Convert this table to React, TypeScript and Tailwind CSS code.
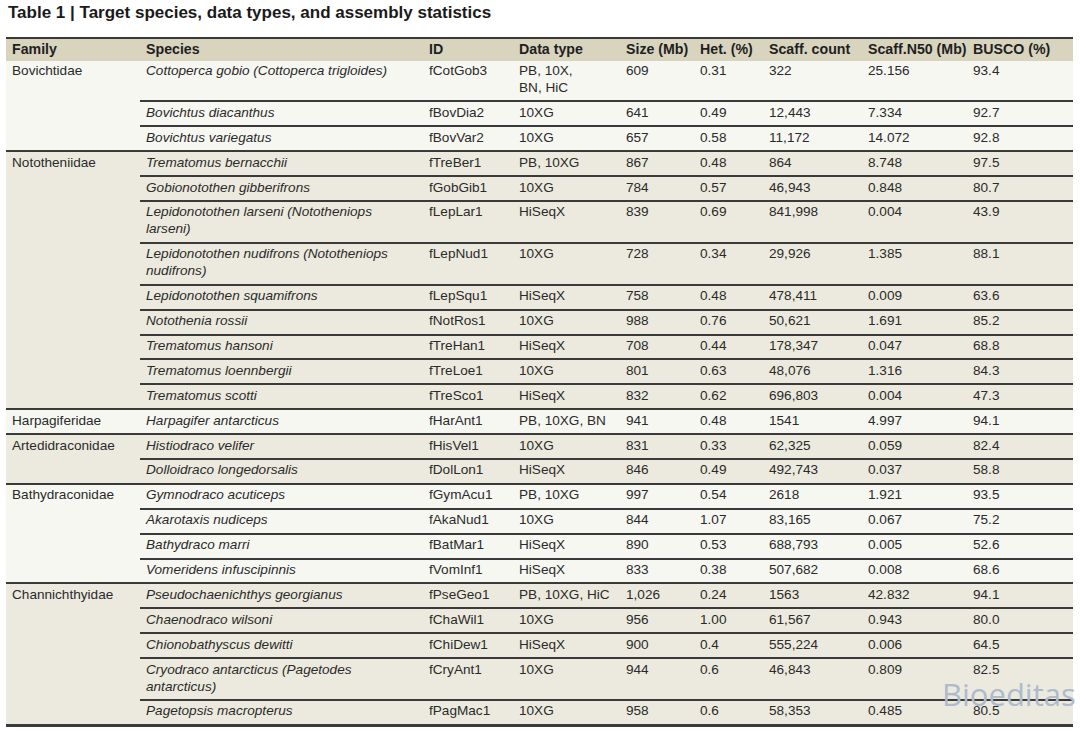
type Row = string[];

interface Group {
  family: string;
  tone: "light" | "dark";
  rows: Row[];
}

const groups: Group[] = [
  {
    family: "Bovichtidae",
    tone: "light",
    rows: [
      ["Cottoperca gobio (Cottoperca trigloides)", "fCotGob3", "PB, 10X,\nBN, HiC", "609", "0.31", "322", "25.156", "93.4"],
      ["Bovichtus diacanthus", "fBovDia2", "10XG", "641", "0.49", "12,443", "7.334", "92.7"],
      ["Bovichtus variegatus", "fBovVar2", "10XG", "657", "0.58", "11,172", "14.072", "92.8"],
    ],
  },
  {
    family: "Nototheniidae",
    tone: "dark",
    rows: [
      ["Trematomus bernacchii", "fTreBer1", "PB, 10XG", "867", "0.48", "864", "8.748", "97.5"],
      ["Gobionotothen gibberifrons", "fGobGib1", "10XG", "784", "0.57", "46,943", "0.848", "80.7"],
      ["Lepidonotothen larseni (Nototheniops\nlarseni)", "fLepLar1", "HiSeqX", "839", "0.69", "841,998", "0.004", "43.9"],
      ["Lepidonotothen nudifrons (Nototheniops\nnudifrons)", "fLepNud1", "10XG", "728", "0.34", "29,926", "1.385", "88.1"],
      ["Lepidonotothen squamifrons", "fLepSqu1", "HiSeqX", "758", "0.48", "478,411", "0.009", "63.6"],
      ["Notothenia rossii", "fNotRos1", "10XG", "988", "0.76", "50,621", "1.691", "85.2"],
      ["Trematomus hansoni", "fTreHan1", "HiSeqX", "708", "0.44", "178,347", "0.047", "68.8"],
      ["Trematomus loennbergii", "fTreLoe1", "10XG", "801", "0.63", "48,076", "1.316", "84.3"],
      ["Trematomus scotti", "fTreSco1", "HiSeqX", "832", "0.62", "696,803", "0.004", "47.3"],
    ],
  },
  {
    family: "Harpagiferidae",
    tone: "light",
    rows: [["Harpagifer antarcticus", "fHarAnt1", "PB, 10XG, BN", "941", "0.48", "1541", "4.997", "94.1"]],
  },
  {
    family: "Artedidraconidae",
    tone: "dark",
    rows: [
      ["Histiodraco velifer", "fHisVel1", "10XG", "831", "0.33", "62,325", "0.059", "82.4"],
      ["Dolloidraco longedorsalis", "fDolLon1", "HiSeqX", "846", "0.49", "492,743", "0.037", "58.8"],
    ],
  },
  {
    family: "Bathydraconidae",
    tone: "light",
    rows: [
      ["Gymnodraco acuticeps", "fGymAcu1", "PB, 10XG", "997", "0.54", "2618", "1.921", "93.5"],
      ["Akarotaxis nudiceps", "fAkaNud1", "10XG", "844", "1.07", "83,165", "0.067", "75.2"],
      ["Bathydraco marri", "fBatMar1", "HiSeqX", "890", "0.53", "688,793", "0.005", "52.6"],
      ["Vomeridens infuscipinnis", "fVomInf1", "HiSeqX", "833", "0.38", "507,682", "0.008", "68.6"],
    ],
  },
  {
    family: "Channichthyidae",
    tone: "dark",
    rows: [
      ["Pseudochaenichthys georgianus", "fPseGeo1", "PB, 10XG, HiC", "1,026", "0.24", "1563", "42.832", "94.1"],
      ["Chaenodraco wilsoni", "fChaWil1", "10XG", "956", "1.00", "61,567", "0.943", "80.0"],
      ["Chionobathyscus dewitti", "fChiDew1", "HiSeqX", "900", "0.4", "555,224", "0.006", "64.5"],
      ["Cryodraco antarcticus (Pagetodes\nantarcticus)", "fCryAnt1", "10XG", "944", "0.6", "46,843", "0.809", "82.5"],
      ["Pagetopsis macropterus", "fPagMac1", "10XG", "958", "0.6", "58,353", "0.485", "80.5"],
    ],
  },
];

const headers = ["Species", "ID", "Data type", "Size (Mb)", "Het. (%)", "Scaff. count", "Scaff.N50 (Mb)", "BUSCO (%)"];

const cols = "grid grid-cols-[283px_90px_107px_74px_69px_99px_105px_106px]";

export default function App() {
  return (
    <div className="relative w-[1080px] h-[732px] overflow-hidden bg-white text-[#2a2a2a] font-['Liberation_Sans',Arial,sans-serif]">
      <h1 className="pl-[8px] pt-[3px] text-[17px] leading-[20px] font-bold text-[#1a1a1a]">
        Table 1 | Target species, data types, and assembly statistics
      </h1>

      <div className="mt-[14px] ml-[6px] w-[1067px] border-t-2 border-b-[3px] border-[#3a3a3a] text-[13.6px] leading-[17px]">
        {/* header */}
        <div className="flex bg-[#d8d4be] font-bold text-[14.2px] text-[#1f1f1f]">
          <div className="w-[134px] pl-[6px] pt-[1.5px] pb-[3px]">Family</div>
          <div className={cols}>
            {headers.map((h) => (
              <div key={h} className="pl-[6px] pt-[1.5px] pb-[3px] whitespace-nowrap">
                {h}
              </div>
            ))}
          </div>
        </div>

        {groups.map((g, gi) => (
          <div
            key={g.family}
            className={`flex ${g.tone === "light" ? "bg-[#f7f7f2]" : "bg-[#eceade]"} ${
              gi > 0 ? "border-t-2 border-[#3a3a3a]" : ""
            }`}
          >
            <div className="w-[134px] pl-[6px] pt-[1.5px]">{g.family}</div>
            <div className="flex flex-col">
              {g.rows.map((r, ri) => (
                <div key={r[1]} className={`${cols} ${ri > 0 ? "border-t-2 border-[#3a3a3a]" : ""}`}>
                  {r.map((c, ci) => (
                    <div
                      key={ci}
                      className={`pl-[6px] pt-[1.5px] pb-[4.4px] whitespace-pre-line ${ci === 0 ? "italic" : ""}`}
                    >
                      {c}
                    </div>
                  ))}
                </div>
              ))}
            </div>
          </div>
        ))}
      </div>

      <p className="mt-[3px] pl-[8px] text-[11px] leading-[14px] text-[#777]">
        PB, PacBio long reads; 10X, 10x Genomics linked reads; BN, Bionano optical maps; HiC, chromatin conformation capture; HiSeqX, Illumina short reads.
      </p>

      <div className="absolute left-[942px] top-[675px] text-[31px] font-normal leading-[38px] text-[#aebbcc] font-['Open_Sans',sans-serif]">
        Bioeditas
      </div>
    </div>
  );
}
